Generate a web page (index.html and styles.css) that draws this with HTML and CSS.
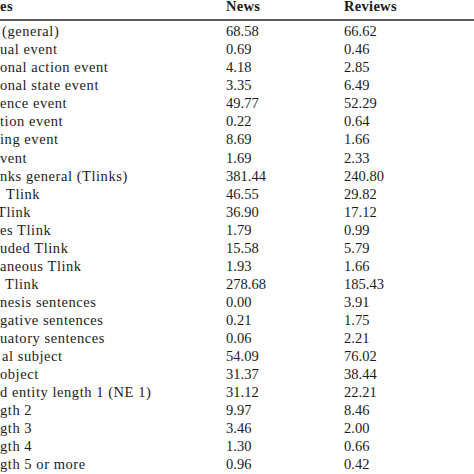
FILE: index.html
```html
<!DOCTYPE html>
<html>
<head>
<meta charset="utf-8">
<link rel="stylesheet" href="styles.css">
</head>
<body>
<div class="table">
  <div class="row head">
    <div class="label">es</div>
    <div class="num">News</div>
    <div class="num">Reviews</div>
  </div>
  <div class="body">
    <div class="row"><div class="label in2">(general)</div><div class="num">68.58</div><div class="num">66.62</div></div>
    <div class="row"><div class="label">ual event</div><div class="num">0.69</div><div class="num">0.46</div></div>
    <div class="row"><div class="label">onal action event</div><div class="num">4.18</div><div class="num">2.85</div></div>
    <div class="row"><div class="label">onal state event</div><div class="num">3.35</div><div class="num">6.49</div></div>
    <div class="row"><div class="label">ence event</div><div class="num">49.77</div><div class="num">52.29</div></div>
    <div class="row"><div class="label">tion event</div><div class="num">0.22</div><div class="num">0.64</div></div>
    <div class="row"><div class="label">ing event</div><div class="num">8.69</div><div class="num">1.66</div></div>
    <div class="row"><div class="label">vent</div><div class="num">1.69</div><div class="num">2.33</div></div>
    <div class="row"><div class="label">nks general (Tlinks)</div><div class="num">381.44</div><div class="num">240.80</div></div>
    <div class="row"><div class="label in6">Tlink</div><div class="num">46.55</div><div class="num">29.82</div></div>
    <div class="row"><div class="label out3">Tlink</div><div class="num">36.90</div><div class="num">17.12</div></div>
    <div class="row"><div class="label">es Tlink</div><div class="num">1.79</div><div class="num">0.99</div></div>
    <div class="row"><div class="label">uded Tlink</div><div class="num">15.58</div><div class="num">5.79</div></div>
    <div class="row"><div class="label">aneous Tlink</div><div class="num">1.93</div><div class="num">1.66</div></div>
    <div class="row"><div class="label in5">Tlink</div><div class="num">278.68</div><div class="num">185.43</div></div>
    <div class="row"><div class="label">nesis sentences</div><div class="num">0.00</div><div class="num">3.91</div></div>
    <div class="row"><div class="label">gative sentences</div><div class="num">0.21</div><div class="num">1.75</div></div>
    <div class="row"><div class="label">uatory sentences</div><div class="num">0.06</div><div class="num">2.21</div></div>
    <div class="row"><div class="label in2">al subject</div><div class="num">54.09</div><div class="num">76.02</div></div>
    <div class="row"><div class="label">object</div><div class="num">31.37</div><div class="num">38.44</div></div>
    <div class="row"><div class="label">d entity length 1 (NE 1)</div><div class="num">31.12</div><div class="num">22.21</div></div>
    <div class="row"><div class="label">gth 2</div><div class="num">9.97</div><div class="num">8.46</div></div>
    <div class="row"><div class="label">gth 3</div><div class="num">3.46</div><div class="num">2.00</div></div>
    <div class="row"><div class="label">gth 4</div><div class="num">1.30</div><div class="num">0.66</div></div>
    <div class="row"><div class="label">gth 5 or more</div><div class="num">0.96</div><div class="num">0.42</div></div>
  </div>
</div>
</body>
</html>
```

FILE: styles.css
```css
html, body {
  margin: 0;
  padding: 0;
  background: #ffffff;
}
body {
  width: 474px;
  height: 474px;
  overflow: hidden;
  font-family: "Liberation Serif", "Times New Roman", serif;
  font-size: 14.5px;
  color: #1c1c1c;
}
.table {
  margin-top: -3.2px;
}
.row {
  display: grid;
  grid-template-columns: 226px 118px 1fr;
  height: 18.04px;
  line-height: 18.04px;
  white-space: nowrap;
}
.head {
  font-weight: bold;
  letter-spacing: 0.3px;
  padding-bottom: 3.66px;
  border-bottom: 2px solid #5a5a5a;
}
.body {
  padding-top: 1.8px;
}
.label {
  overflow: hidden;
  letter-spacing: 0.55px;
}
.in2 { text-indent: 2px; }
.in5 { text-indent: 5px; }
.in6 { text-indent: 6px; }
.out3 { text-indent: -3px; }
```
